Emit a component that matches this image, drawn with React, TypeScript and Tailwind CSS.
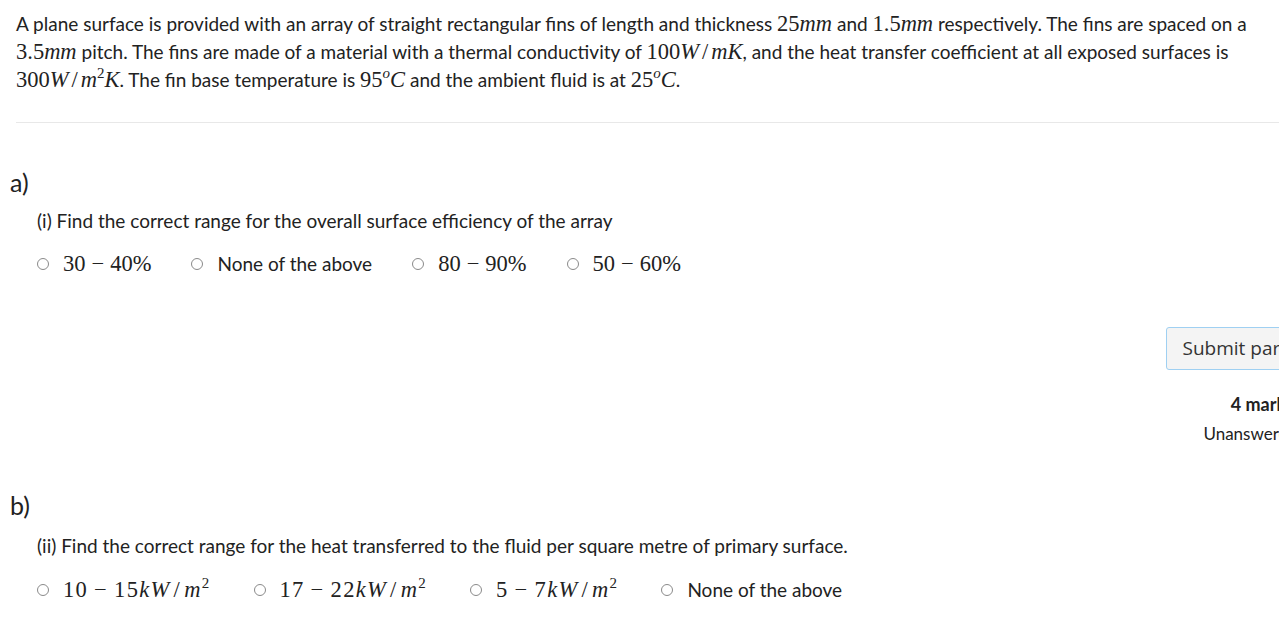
import React from "react";

const M = ({ children, wide }: { children: React.ReactNode; wide?: boolean }) => (
  <span
    className={
      wide
        ? "font-['Liberation_Serif',serif] text-[22.5px] whitespace-nowrap tracking-[1.3px]"
        : "font-['Liberation_Serif',serif] text-[22.5px] whitespace-nowrap"
    }
  >
    {children}
  </span>
);
const I = ({ children }: { children: React.ReactNode }) => <i>{children}</i>;
const Sup = ({ children }: { children: React.ReactNode }) => (
  <span className="relative top-[-9px] text-[15px] leading-none">{children}</span>
);
const Minus = () => <span className="mx-[6px]">−</span>;
const Slash = () => <span className="mx-[3px]">/</span>;

function Radio({ children }: { children: React.ReactNode }) {
  return (
    <label className="flex items-center gap-[14px]">
      <span className="inline-block w-[12px] h-[12px] rounded-full border border-[#8a8a8a] bg-white" />
      <span>{children}</span>
    </label>
  );
}

const kw = (a: string, b: string) => (
  <M wide>
    {a}
    <Minus />
    {b}
    <I>kW</I>
    <Slash />
    <I>m</I>
    <Sup>2</Sup>
  </M>
);

export default function App() {
  return (
    <div className="w-[1279px] h-[621px] overflow-hidden bg-white text-[#222] font-['Lato',sans-serif] text-[19px]">
      <p className="px-4 pt-[10px] leading-[28px] pr-[4px]">
        A plane surface is provided with an array of straight rectangular fins of length and thickness{" "}
        <M>
          25<I>mm</I>
        </M>{" "}
        and{" "}
        <M>
          1.5<I>mm</I>
        </M>{" "}
        respectively. The fins are spaced on a{" "}
        <M>
          3.5<I>mm</I>
        </M>{" "}
        pitch. The fins are made of a material with a thermal conductivity of{" "}
        <M>
          100<I>W</I>
          <Slash />
          <I>mK</I>
        </M>
        , and the heat transfer coefficient at all exposed surfaces is{" "}
        <M>
          300<I>W</I>
          <Slash />
          <I>m</I>
          <Sup>2</Sup>
          <I>K</I>
        </M>
        . The fin base temperature is{" "}
        <M>
          95
          <Sup>
            <I>o</I>
          </Sup>
          <I>C</I>
        </M>{" "}
        and the ambient fluid is at{" "}
        <M>
          25
          <Sup>
            <I>o</I>
          </Sup>
          <I>C</I>
        </M>
        .
      </p>

      <div className="ml-4 mt-[28px] border-t border-[#e8e8e8]" />

      <section className="pt-[44px]">
        <div className="pl-[10px] text-[25px] leading-[30px]">a)</div>
        <div className="pl-[37px] mt-[10px] leading-[28px]">
          (i) Find the correct range for the overall surface efficiency of the array
        </div>
        <div className="pl-[37px] mt-[15px] flex gap-[40px] leading-[28px]">
          <Radio>
            <M>
              30
              <Minus />
              40%
            </M>
          </Radio>
          <Radio>None of the above</Radio>
          <Radio>
            <M>
              80
              <Minus />
              90%
            </M>
          </Radio>
          <Radio>
            <M>
              50
              <Minus />
              60%
            </M>
          </Radio>
        </div>

        <div className="flex justify-end -mr-[24px] mt-[49px]">
          <div className="flex flex-col items-end">
            <button className="h-[43px] px-[15px] rounded-[3px] border border-[#9fd0f2] bg-[#f4f4f4] text-[#333] font-['Open_Sans',sans-serif] text-[19px]">
              Submit part
            </button>
            <div className="mt-[21px] font-bold text-[18px] leading-[26px] pr-[9px]">4 marks</div>
            <div className="mt-[4px] text-[17px] leading-[26px] pr-[6px]">Unanswered</div>
          </div>
        </div>
      </section>

      <section className="pt-[43px]">
        <div className="pl-[10px] text-[25px] leading-[30px]">b)</div>
        <div className="pl-[37px] mt-[12px] leading-[28px]">
          (ii) Find the correct range for the heat transferred to the fluid per square metre of primary surface.
        </div>
        <div className="pl-[37px] mt-[16px] flex gap-[43px] leading-[28px]">
          <Radio>{kw("10", "15")}</Radio>
          <Radio>{kw("17", "22")}</Radio>
          <Radio>{kw("5", "7")}</Radio>
          <Radio>None of the above</Radio>
        </div>
      </section>
    </div>
  );
}
